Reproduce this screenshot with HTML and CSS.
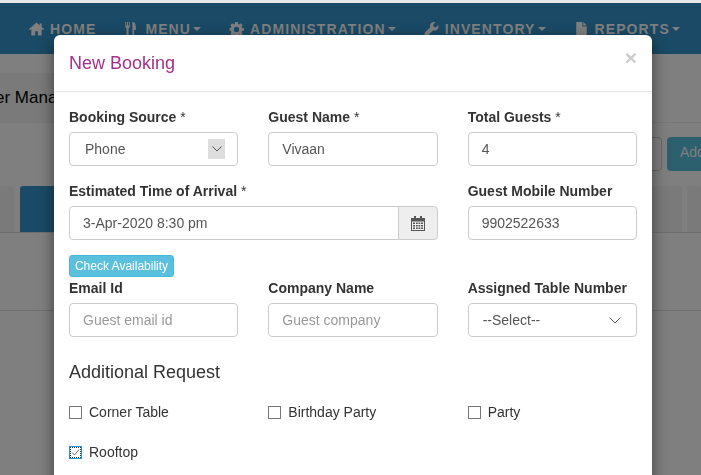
FILE: index.html
```html
<!DOCTYPE html>
<html lang="en">
<head>
  <meta charset="UTF-8" />
  <title>New Booking</title>
  <link rel="stylesheet" href="styles.css">
</head>
<body>

  <div class="top-strip"></div>

  <!-- page behind the dialog, colours already dimmed -->
  <div class="page">
    <nav class="navbar">
      <a class="nav-item">
        <svg class="nav-icon" viewBox="0 0 16 14"><path d="M8 0 0 7l1 1.200L2.500 7v7h4V9.500h3V14h4V7L15 8.200 16 7l-2.500-2.200V1h-2v2z"/></svg>HOME</a>
      <a class="nav-item">
        <svg class="nav-icon" viewBox="0 0 14 16"><path d="M0 0h1v4h1V0h1v4h1V0h1v6L3.700 7.500V16H1.300V7.500L0 6zM8 16V0c3 0 4 3 4 7v2H10v7z"/></svg>MENU<i class="caret"></i></a>
      <a class="nav-item">
        <svg class="nav-icon" viewBox="0 0 16 16"><path fill-rule="evenodd" d="M6.500 0h3l.4 2.200 1.300.6L13 1.500 15 3.600l-1.200 1.800.5 1.200 2.200.4v3l-2.200.4-.5 1.300 1.200 1.800-2 2-1.800-1.200-1.300.5-.4 2.200h-3l-.4-2.200-1.300-.5L3 15.500 1 13.500l1.200-1.800-.5-1.300L0 10V7l1.700-.4.500-1.200L1 3.600l2-2.100 1.800 1.300 1.300-.6zM8 5.500a3 3 0 1 0 0 6 3 3 0 0 0 0-6z"/></svg>ADMINISTRATION<i class="caret"></i></a>
      <a class="nav-item">
        <svg class="nav-icon" viewBox="0 0 16 16"><path d="M15.800 3.500 13 6.300l-2.500-.8-.8-2.500L12.500.2C10.500-.4 8 .2 7 2c-.8 1.300-.8 2.800-.4 4L.5 12.100a1.800 1.800 0 0 0 0 2.500l.9.900a1.800 1.800 0 0 0 2.500 0L10 9.400c1.300.4 2.800.3 4-.4 1.800-1.100 2.400-3.500 1.800-5.500z"/></svg>INVENTORY<i class="caret"></i></a>
      <a class="nav-item">
        <svg class="nav-icon" viewBox="0 0 12 16"><path d="M0 0h7v5h5v11H0zM8 0l4 4H8z"/></svg>REPORTS<i class="caret"></i></a>
    </nav>
    <div class="page-head">
      <div class="page-title">er Mana</div>
    </div>
    <div class="page-tools">
      <span class="tool-box"></span>
      <span class="tool-add">Add</span>
    </div>
    <div class="page-tabs">
      <span class="tab tab-first"></span>
      <span class="tab tab-active"></span>
      <span class="tab-fill"></span>
      <span class="tab tab-r1"></span>
      <span class="tab tab-r2"></span>
    </div>
    <div class="page-rule"></div>
  </div>

  <!-- booking dialog -->
  <div class="modal">
    <div class="modal-header">
      <h4>New Booking</h4>
      <span class="close">×</span>
    </div>
    <div class="modal-body">

      <div class="row">
        <div class="field">
          <label>Booking Source <span class="req">*</span></label>
          <div class="control select-old">Phone<span class="old-arrow"><svg viewBox="0 0 10 6"><path d="M.5.500 5 5 9.500.5"/></svg></span></div>
        </div>
        <div class="field">
          <label>Guest Name <span class="req">*</span></label>
          <div class="control">Vivaan</div>
        </div>
        <div class="field">
          <label>Total Guests <span class="req">*</span></label>
          <div class="control">4</div>
        </div>
      </div>

      <div class="row">
        <div class="field field-wide">
          <label>Estimated Time of Arrival <span class="req">*</span></label>
          <div class="input-group">
            <div class="control">3-Apr-2020 8:30 pm</div>
            <span class="addon">
              <svg viewBox="0 0 14 15"><path fill-rule="evenodd" d="M3 0h2v2h4V0h2v2h3v13H0V2h3zM1 5.500V14h12V5.500zM2 6.500h2v1.500H2zM5 6.500h1.700v1.500H5zM7.500 6.500h1.700v1.500H7.500zM10 6.500h2v1.500h-2zM2 9h2v1.500H2zM5 9h1.700v1.500H5zM7.500 9h1.700v1.500H7.500zM10 9h2v1.500h-2zM2 11.500h2V13H2zM5 11.500h1.700V13H5zM7.500 11.500h1.700V13H7.500zM10 11.500h2V13h-2z"/></svg>
            </span>
          </div>
        </div>
        <div class="field">
          <label>Guest Mobile Number</label>
          <div class="control">9902522633</div>
        </div>
      </div>

      <button class="btn-check">Check Availability</button>

      <div class="row row-tight">
        <div class="field">
          <label>Email Id</label>
          <div class="control placeholder">Guest email id</div>
        </div>
        <div class="field">
          <label>Company Name</label>
          <div class="control placeholder">Guest company</div>
        </div>
        <div class="field">
          <label>Assigned Table Number</label>
          <div class="control select-new">--Select--<svg viewBox="0 0 12 7"><path d="M.5.500 6 6l5.500-5.500"/></svg></div>
        </div>
      </div>

      <h4 class="section-title">Additional Request</h4>

      <div class="checks">
        <label class="check"><span class="box"></span>Corner Table</label>
        <label class="check"><span class="box"></span>Birthday Party</label>
        <label class="check"><span class="box"></span>Party</label>
        <label class="check"><span class="box box-on"><svg viewBox="0 0 11 11"><path d="M2 5.500l2.500 2.500L9 2.500"/></svg></span>Rooftop</label>
      </div>
    </div>
  </div>

</body>
</html>
```

FILE: styles.css
```css
html, body {
  margin: 0;
  height: 100%;
  overflow: hidden;
}
body {
  font-family: "Liberation Sans", Arial, sans-serif;
  font-size: 14px;
  color: #333;
  background: #7f7f7f;
}

/* browser edge above the page */
.top-strip {
  height: 3px;
  background: #e8e8e8;
}

/* page behind the dialog */
.navbar {
  display: flex;
  height: 51px;
  padding: 15px 0 0 29px;
  box-sizing: border-box;
  background: #1b4a66;
  gap: 28px;
  overflow: hidden;
}
.nav-item {
  display: flex;
  align-items: center;
  height: 21px;
  font-weight: bold;
  letter-spacing: 1.1px;
  color: #7f7f7f;
  white-space: nowrap;
}
.nav-icon {
  height: 14px;
  width: 15px;
  margin-right: 6px;
  fill: #7f7f7f;
}
.caret {
  width: 0;
  height: 0;
  margin-left: 2px;
  border-top: 4px solid #7f7f7f;
  border-left: 4px solid transparent;
  border-right: 4px solid transparent;
}
.page-head {
  height: 49px;
  margin-top: 19px;
  border-bottom: 1px solid #777;
}
.page-title {
  width: 200px;
  height: 49px;
  font-size: 17px;
  line-height: 49px;
  text-indent: -5px;
  color: #000;
  white-space: nowrap;
  background: #7a7a7a;
}
.page-tools {
  display: flex;
  justify-content: flex-end;
  gap: 5px;
  height: 34px;
  margin-top: 14px;
}
.tool-box {
  width: 40px;
  border: 1px solid #666;
  border-radius: 4px;
  box-sizing: border-box;
}
.tool-add {
  width: 34px;
  padding: 7px 0 0 13px;
  box-sizing: border-box;
  background: #2d606f;
  border-radius: 4px 0 0 4px;
  color: #7f7f7f;
  white-space: nowrap;
  overflow: hidden;
}
.page-tabs {
  display: flex;
  gap: 5px;
  height: 46px;
  margin-top: 15px;
  border-bottom: 1px solid #6f6f6f;
}
.tab {
  background: #7a7a7a;
  border-radius: 3px 3px 0 0;
}
.tab-first { width: 14px; }
.tab-active { width: 60px; margin-left: 1px; background: #1b4a66; }
.tab-fill { flex: 1; }
.tab-r1 { width: 30px; }
.tab-r2 { width: 14px; }
.page-rule {
  height: 77px;
  border-bottom: 1px solid #6f6f6f;
}

/* dialog */
.modal {
  position: fixed;
  left: 54px;
  top: 35px;
  width: 598px;
  height: 600px;
  background: #fff;
  border-radius: 6px;
  box-shadow: 0 5px 15px rgba(0, 0, 0, 0.5);
}
.modal-header {
  display: flex;
  justify-content: space-between;
  height: 57px;
  padding: 15px;
  box-sizing: border-box;
  border-bottom: 1px solid #e5e5e5;
}
.modal-header h4 {
  margin: 0;
  font-size: 18px;
  font-weight: normal;
  line-height: 26px;
  color: #a5308c;
}
.close {
  font-size: 21px;
  font-weight: bold;
  line-height: 15px;
  color: #ccc;
}
.modal-body {
  padding: 15px;
}
.row {
  display: grid;
  grid-template-columns: repeat(3, 1fr);
  gap: 30px;
  margin-bottom: 15px;
}
.row-tight {
  margin-bottom: 0;
}
.field-wide {
  grid-column: span 2;
}
.field label {
  display: block;
  height: 20px;
  margin-bottom: 5px;
  font-weight: bold;
  line-height: 20px;
  white-space: nowrap;
}
.req {
  font-weight: normal;
}
.control {
  display: flex;
  align-items: center;
  height: 34px;
  padding: 0 13px;
  box-sizing: border-box;
  border: 1px solid #ccc;
  border-radius: 4px;
  color: #555;
  background: #fff;
}
.placeholder {
  color: #999;
}
.select-old {
  justify-content: space-between;
  padding: 0 12px 0 15px;
}
.old-arrow {
  display: flex;
  align-items: center;
  justify-content: center;
  width: 17px;
  height: 20px;
  background: #ddd;
}
.old-arrow svg,
.select-new svg {
  fill: none;
  stroke: #555;
}
.old-arrow svg {
  width: 10px;
  height: 6px;
}
.select-new {
  justify-content: space-between;
  padding: 0 15px 0 14px;
}
.select-new svg {
  width: 12px;
  height: 7px;
}
.input-group {
  display: flex;
}
.input-group .control {
  flex: 1;
  border-radius: 4px 0 0 4px;
}
.addon {
  display: flex;
  align-items: center;
  justify-content: center;
  width: 40px;
  box-sizing: border-box;
  border: 1px solid #ccc;
  margin-left: -1px;
  border-radius: 0 4px 4px 0;
  background: #eee;
}
.addon svg {
  width: 14px;
  height: 15px;
  fill: #555;
}
.btn-check {
  display: block;
  width: 105px;
  height: 22px;
  padding: 0;
  margin-bottom: 1px;
  border: 1px solid #46b8da;
  border-radius: 3px;
  font-family: inherit;
  font-size: 12px;
  line-height: 18px;
  color: #fff;
  background: #5bc0de;
}
.section-title {
  margin: 25px 0 0;
  font-size: 18px;
  font-weight: normal;
  line-height: 20px;
}
.checks {
  display: grid;
  grid-template-columns: repeat(3, 1fr);
  column-gap: 30px;
  row-gap: 20px;
  margin-top: 20px;
}
.check {
  display: flex;
  align-items: center;
  gap: 7px;
  height: 20px;
}
.box {
  width: 13px;
  height: 13px;
  box-sizing: border-box;
  border: 1px solid #767676;
  background: #fff;
}
.box-on {
  display: flex;
  border: 1px solid #1e9ad6;
  outline: 1px dotted #333;
  outline-offset: -2px;
}
.box-on svg {
  width: 11px;
  height: 11px;
  fill: none;
  stroke: #777;
}
```
